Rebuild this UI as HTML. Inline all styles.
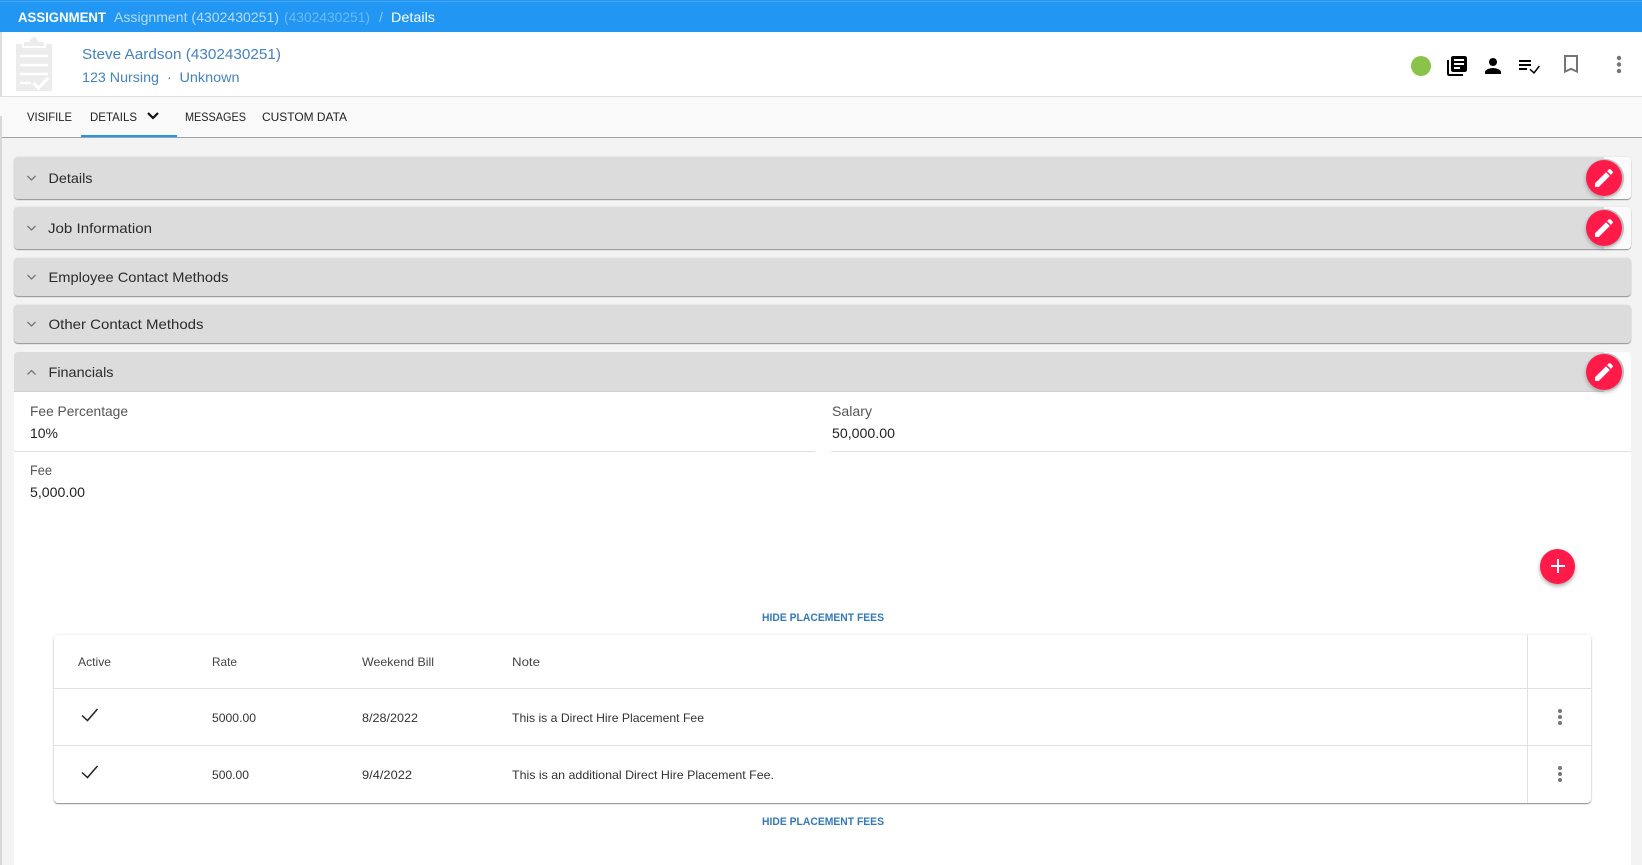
<!DOCTYPE html>
<html lang="en"><head><meta charset="utf-8"><title>Assignment Details</title>
<style>
html,body{margin:0;padding:0;width:1642px;height:865px;overflow:hidden;background:#f3f3f3}
.a{position:absolute}
svg{position:absolute;left:0;top:0}
text{font-family:"Liberation Sans",sans-serif;font-size:14px;fill:#333}
.row{position:absolute;left:14px;width:1617px;background:#dcdcdc;border-radius:4px;box-shadow:0 1px 1px #8f8f8f,0 -1px 1px #e9e9e9}
.row.f{background:linear-gradient(90deg,#dcdcdc 1590px,#fbfbfb 1590px)}
.fab{position:absolute;left:1586px;width:36px;height:36px;border-radius:50%;background:#ff1a4a;box-shadow:1px 0 0 1px #bbb,0 2px 4px rgba(0,0,0,.3)}
</style></head><body>
<div class="a" style="left:0;top:0;width:1642px;height:32px;background:#2196f3"></div>
<div class="a" style="left:0;top:1px;width:1642px;height:1px;background:#42a5f5"></div>
<div class="a" style="left:0;top:32px;width:1642px;height:64px;background:#fff"></div>
<div class="a" style="left:0;top:96px;width:1642px;height:1px;background:#e0e0e0"></div>
<div class="a" style="left:0;top:97px;width:1642px;height:40px;background:#f9f9f9"></div>
<div class="a" style="left:0;top:137px;width:1642px;height:1px;background:#a0a0a0"></div>
<div class="a" style="left:81px;top:135px;width:96px;height:2px;background:#2196f3"></div>
<div class="a" style="left:0;top:32px;width:2px;height:65px;background:#dedede"></div>
<div class="a" style="left:0;top:116px;width:2px;height:749px;background:#d8d8d8"></div>

<div class="row f" style="top:157px;height:42px"></div>
<div class="row f" style="top:207px;height:42px"></div>
<div class="row" style="top:258px;height:38px"></div>
<div class="row" style="top:305px;height:38px"></div>
<div class="a" style="left:14px;top:352px;width:1617px;height:513px;background:#fff;border-radius:4px 4px 0 0"></div>
<div class="a" style="left:14px;top:352px;width:1590px;height:40px;background:#dcdcdc;border-bottom:1px solid #cfcfcf;box-sizing:border-box;border-radius:4px 0 0 0"></div>
<div class="a" style="left:14px;top:451px;width:801px;height:1px;background:#e0e0e0"></div>
<div class="a" style="left:831px;top:451px;width:800px;height:1px;background:#e0e0e0"></div>

<div class="fab" style="top:160px"></div>
<div class="fab" style="top:210px"></div>
<div class="fab" style="top:354px"></div>
<div class="a" style="left:1540px;top:549px;width:35px;height:35px;border-radius:50%;background:#ff1a4a;box-shadow:0 2px 4px rgba(0,0,0,.35)"></div>

<div class="a" style="left:54px;top:635px;width:1537px;height:168px;background:#fff;border-radius:4px;box-shadow:0 1px 1px #8f8f8f,0 0 3px rgba(0,0,0,.12)"></div>
<div class="a" style="left:54px;top:688px;width:1537px;height:1px;background:#e0e0e0"></div>
<div class="a" style="left:54px;top:745px;width:1537px;height:1px;background:#e0e0e0"></div>
<div class="a" style="left:1527px;top:635px;width:1px;height:168px;background:#e0e0e0"></div>

<svg width="1642" height="865" viewBox="0 0 1642 865" xmlns="http://www.w3.org/2000/svg">
<text x="18" y="22" textLength="88" lengthAdjust="spacingAndGlyphs" style="font-weight:700;fill:#fff">ASSIGNMENT</text>
<text x="114" y="22" textLength="165" lengthAdjust="spacingAndGlyphs" style="fill:#b5dcfb">Assignment (4302430251)</text>
<text x="284" y="22" textLength="86" lengthAdjust="spacingAndGlyphs" style="fill:#6cbaf7">(4302430251)</text>
<text x="379" y="22" style="fill:#8ccaf9">/</text>
<text x="391" y="22" textLength="44" lengthAdjust="spacingAndGlyphs" style="fill:#fff">Details</text>

<text x="82" y="59" textLength="199" lengthAdjust="spacingAndGlyphs" style="font-size:15px;fill:#4583c0">Steve Aardson (4302430251)</text>
<text x="82" y="82" textLength="77" lengthAdjust="spacingAndGlyphs" style="fill:#4583c0">123 Nursing</text>
<text x="167" y="82" style="fill:#4583c0">·</text>
<text x="179.500" y="82" textLength="60" lengthAdjust="spacingAndGlyphs" style="fill:#4583c0">Unknown</text>

<text x="27" y="121" textLength="45" lengthAdjust="spacingAndGlyphs" style="font-size:12px;fill:#222">VISIFILE</text>
<text x="90" y="121" textLength="47" lengthAdjust="spacingAndGlyphs" style="font-size:12px;fill:#222">DETAILS</text>
<text x="185" y="121" textLength="61" lengthAdjust="spacingAndGlyphs" style="font-size:12px;fill:#222">MESSAGES</text>
<text x="262" y="121" textLength="85" lengthAdjust="spacingAndGlyphs" style="font-size:12px;fill:#222">CUSTOM DATA</text>

<text x="48.500" y="183" textLength="44" lengthAdjust="spacingAndGlyphs" style="fill:#2b2b2b">Details</text>
<text x="48" y="233" textLength="104" lengthAdjust="spacingAndGlyphs" style="fill:#2b2b2b">Job Information</text>
<text x="48.500" y="282" textLength="180" lengthAdjust="spacingAndGlyphs" style="fill:#2b2b2b">Employee Contact Methods</text>
<text x="48.500" y="329" textLength="155" lengthAdjust="spacingAndGlyphs" style="fill:#2b2b2b">Other Contact Methods</text>
<text x="48.500" y="377" textLength="65" lengthAdjust="spacingAndGlyphs" style="fill:#2b2b2b">Financials</text>

<text x="30" y="416" textLength="98" lengthAdjust="spacingAndGlyphs" style="fill:#555">Fee Percentage</text>
<text x="30" y="438" textLength="28" lengthAdjust="spacingAndGlyphs" style="fill:#222">10%</text>
<text x="832" y="416" textLength="40" lengthAdjust="spacingAndGlyphs" style="fill:#555">Salary</text>
<text x="832" y="438" textLength="63" lengthAdjust="spacingAndGlyphs" style="fill:#222">50,000.00</text>
<text x="30" y="475" textLength="22" lengthAdjust="spacingAndGlyphs" style="fill:#555">Fee</text>
<text x="30" y="497" textLength="55" lengthAdjust="spacingAndGlyphs" style="fill:#222">5,000.00</text>

<text x="762" y="621" textLength="122" lengthAdjust="spacingAndGlyphs" style="font-size:11px;font-weight:700;fill:#337ab7">HIDE PLACEMENT FEES</text>
<text x="762" y="825" textLength="122" lengthAdjust="spacingAndGlyphs" style="font-size:11px;font-weight:700;fill:#337ab7">HIDE PLACEMENT FEES</text>

<text x="78" y="666" textLength="33" lengthAdjust="spacingAndGlyphs" style="font-size:12px;fill:#444">Active</text>
<text x="212" y="666" textLength="25" lengthAdjust="spacingAndGlyphs" style="font-size:12px;fill:#444">Rate</text>
<text x="362" y="666" textLength="72" lengthAdjust="spacingAndGlyphs" style="font-size:12px;fill:#444">Weekend Bill</text>
<text x="512" y="666" textLength="28" lengthAdjust="spacingAndGlyphs" style="font-size:12px;fill:#444">Note</text>
<text x="212" y="722" textLength="44" lengthAdjust="spacingAndGlyphs" style="font-size:12px;fill:#333">5000.00</text>
<text x="362" y="722" textLength="56" lengthAdjust="spacingAndGlyphs" style="font-size:12px;fill:#333">8/28/2022</text>
<text x="512" y="722" textLength="192" lengthAdjust="spacingAndGlyphs" style="font-size:12px;fill:#333">This is a Direct Hire Placement Fee</text>
<text x="212" y="779" textLength="37" lengthAdjust="spacingAndGlyphs" style="font-size:12px;fill:#333">500.00</text>
<text x="362" y="779" textLength="50" lengthAdjust="spacingAndGlyphs" style="font-size:12px;fill:#333">9/4/2022</text>
<text x="512" y="779" textLength="262" lengthAdjust="spacingAndGlyphs" style="font-size:12px;fill:#333">This is an additional Direct Hire Placement Fee.</text>

<!-- clipboard -->
<path fill="#ececec" d="M16 44h6v4h24v-4h6v47H16z"/>
<path fill="#ececec" d="M24 42h6c0-3 2-5 4-5s4 2 4 5h6v4H24z"/>
<path fill="none" stroke="#fff" stroke-width="2.500" d="M20 56h28M20 65h28M20 74h28M20 83h11"/>
<path fill="none" stroke="#fff" stroke-width="3" d="M33.500 83l5 5 9.500-10"/>

<path fill="none" stroke="#111" stroke-width="2.200" d="M148 113l5 5 5-5"/>

<circle cx="1421" cy="66" r="10" fill="#8bc34a"/>
<path transform="translate(1445,54)" fill="#000" d="M4 6H2v14c0 1.100.9 2 2 2h14v-2H4V6zm16-4H8c-1.100 0-2 .9-2 2v12c0 1.100.9 2 2 2h12c1.100 0 2-.9 2-2V4c0-1.100-.9-2-2-2zm-1 9H9V9h10v2zm-4 4H9v-2h6v2zm4-8H9V5h10v2z"/>
<path transform="translate(1481,54)" fill="#000" d="M12 12c2.210 0 4-1.790 4-4s-1.790-4-4-4-4 1.790-4 4 1.790 4 4 4zm0 2c-2.670 0-8 1.340-8 4v2h16v-2c0-2.660-5.330-4-8-4z"/>
<path fill="#000" d="M1519 60h12v2h-12zM1519 64h12v2h-12zM1519 68h8v2h-8z"/>
<path fill="none" stroke="#000" stroke-width="1.500" d="M1530 69.300l4 3.600 5.400-6.900"/>
<path fill="none" stroke="#757575" stroke-width="2" d="M1565 56h12v15.600l-6-2.800-6 2.800z"/>
<g fill="#757575"><circle cx="1619" cy="58" r="2.200"/><circle cx="1619" cy="64.500" r="2.200"/><circle cx="1619" cy="71" r="2.200"/></g>

<g fill="none" stroke="#757575" stroke-width="1.300">
<path d="M27.500 176l4 4 4-4"/><path d="M27.500 226l4 4 4-4"/><path d="M27.500 275l4 4 4-4"/><path d="M27.500 322l4 4 4-4"/><path d="M27.500 374.500l4-4 4 4"/>
</g>

<g fill="#fff">
<path transform="translate(1592,166)" d="M3 17.250V21h3.750L17.810 9.940l-3.750-3.750L3 17.250zM20.710 7.040c.39-.39.39-1.020 0-1.410l-2.340-2.340c-.39-.39-1.020-.39-1.410 0l-1.830 1.830 3.750 3.750 1.830-1.830z"/>
<path transform="translate(1592,216)" d="M3 17.250V21h3.750L17.810 9.940l-3.750-3.750L3 17.250zM20.710 7.040c.39-.39.39-1.020 0-1.410l-2.340-2.340c-.39-.39-1.020-.39-1.410 0l-1.830 1.830 3.750 3.750 1.830-1.830z"/>
<path transform="translate(1592,360)" d="M3 17.250V21h3.750L17.810 9.940l-3.750-3.750L3 17.250zM20.710 7.040c.39-.39.39-1.020 0-1.410l-2.340-2.340c-.39-.39-1.020-.39-1.410 0l-1.830 1.830 3.750 3.750 1.830-1.830z"/>
</g>
<path fill="#fff" d="M1551 565h14v2h-14zM1557 559h2v14h-2z"/>

<g fill="none" stroke="#222" stroke-width="1.500">
<path d="M82 715.500l5.500 5 10-11.500"/><path d="M82 772.500l5.500 5 10-11.500"/>
</g>
<g fill="#757575">
<circle cx="1560" cy="711" r="2"/><circle cx="1560" cy="717" r="2"/><circle cx="1560" cy="723" r="2"/>
<circle cx="1560" cy="768" r="2"/><circle cx="1560" cy="774" r="2"/><circle cx="1560" cy="780" r="2"/>
</g>
</svg>
</body></html>
